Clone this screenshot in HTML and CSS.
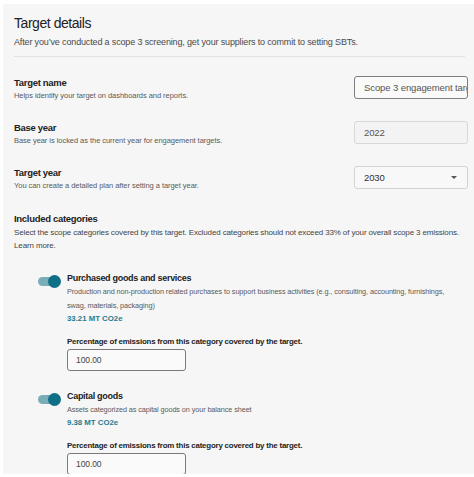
FILE: index.html
```html
<!DOCTYPE html>
<html lang="en">
<head>
<meta charset="utf-8">
<title>Target details</title>
<link rel="stylesheet" href="styles.css">
</head>
<body>
<div class="panel">
  <h1 class="title">Target details</h1>
  <p class="subtitle">After you’ve conducted a scope 3 screening, get your suppliers to commit to setting SBTs.</p>
  <hr class="divider">

  <div class="row">
    <div class="row-text">
      <div class="label">Target name</div>
      <div class="helper">Helps identify your target on dashboards and reports.</div>
    </div>
    <div class="field field-active"><span class="field-value">Scope 3 engagement targ</span></div>
  </div>

  <div class="row">
    <div class="row-text">
      <div class="label">Base year</div>
      <div class="helper">Base year is locked as the current year for engagement targets.</div>
    </div>
    <div class="field field-disabled"><span class="field-value">2022</span></div>
  </div>

  <div class="row">
    <div class="row-text">
      <div class="label">Target year</div>
      <div class="helper">You can create a detailed plan after setting a target year.</div>
    </div>
    <div class="field field-select"><span class="field-value">2030</span><span class="caret"></span></div>
  </div>

  <div class="included">
    <div class="label">Included categories</div>
    <p class="included-desc">Select the scope categories covered by this target. Excluded categories should not exceed 33% of your overall scope 3 emissions. Learn more.</p>
  </div>

  <div class="category first">
    <div class="toggle"><span class="knob"></span></div>
    <div class="cat-body">
      <div class="cat-title">Purchased goods and services</div>
      <p class="cat-desc">Production and non-production related purchases to support business activities (e.g., consulting, accounting, furnishings, swag, materials, packaging)</p>
      <div class="cat-amount">33.21 MT CO2e</div>
      <div class="pct-label">Percentage of emissions from this category covered by the target.</div>
      <div class="pct-input">100.00</div>
    </div>
  </div>

  <div class="category">
    <div class="toggle"><span class="knob"></span></div>
    <div class="cat-body">
      <div class="cat-title">Capital goods</div>
      <p class="cat-desc">Assets categorized as capital goods on your balance sheet</p>
      <div class="cat-amount">9.38 MT CO2e</div>
      <div class="pct-label">Percentage of emissions from this category covered by the target.</div>
      <div class="pct-input">100.00</div>
    </div>
  </div>
</div>
</body>
</html>
```

FILE: styles.css
```css
html, body {
  margin: 0;
  padding: 0;
  background: #ffffff;
  overflow: hidden;
}

body {
  font-family: "Liberation Sans", Arial, sans-serif;
  color: #222;
}

.panel {
  margin: 4px 0 0 3px;
  height: 470px;
  overflow: hidden;
  background: #f6f6f6;
  padding: 10px 6px 0 11px;
  box-sizing: border-box;
}

.title {
  margin: 0;
  font-size: 14px;
  line-height: 18px;
  letter-spacing: -0.45px;
  font-weight: 400;
  color: #222;
}

.subtitle {
  margin: 4px 0 0;
  font-size: 9px;
  line-height: 12px;
  letter-spacing: -0.15px;
  color: #4a4a4a;
}

.divider {
  margin: 8px 3px 0 0;
  border: 0;
  border-top: 1px solid #e2e2e2;
  height: 0;
}

.row {
  display: flex;
  justify-content: space-between;
  align-items: flex-start;
  height: 26px;
  margin-top: 19px;
}

.label {
  font-size: 9.5px;
  line-height: 14px;
  letter-spacing: -0.3px;
  font-weight: 700;
  color: #222;
}

.helper {
  font-size: 7.5px;
  line-height: 12px;
  letter-spacing: -0.05px;
  color: #5a5a5a;
}

.field {
  width: 114px;
  height: 23px;
  box-sizing: border-box;
  border-radius: 3px;
  padding: 0 9px;
  font-size: 9.5px;
  line-height: 21px;
  color: #555;
  white-space: nowrap;
  overflow: hidden;
  display: flex;
  align-items: center;
  justify-content: space-between;
}

.field-value {
  letter-spacing: -0.1px;
}

.field-active {
  border: 1px solid #7d7d7d;
  background: #fafafa;
  justify-content: flex-start;
}

.field-disabled {
  border: 1px solid #d8d8d8;
  background: #f3f3f3;
}

.field-select {
  border: 1px solid #d3d3d3;
  background: #f8f8f8;
  color: #333;
}

.caret {
  flex: none;
  width: 0;
  height: 0;
  border-left: 3px solid transparent;
  border-right: 3px solid transparent;
  border-top: 3px solid #555;
  margin-right: 1px;
}

.included {
  margin-top: 20px;
}

.included-desc {
  margin: 0;
  font-size: 8px;
  line-height: 13px;
  letter-spacing: -0.13px;
  color: #444;
}

.category {
  display: flex;
  align-items: flex-start;
  gap: 7px;
  padding-left: 24px;
  margin-top: 18px;
}

.category.first {
  margin-top: 19px;
}

.toggle {
  position: relative;
  flex: none;
  width: 22px;
  height: 9px;
  margin-top: 6px;
  border-radius: 5px;
  background: #79adb8;
}

.knob {
  position: absolute;
  right: -1px;
  top: -2px;
  width: 13px;
  height: 13px;
  border-radius: 50%;
  background: #0f6f86;
}

.cat-body {
  flex: 1;
  max-width: 388px;
}

.cat-title {
  font-size: 9px;
  line-height: 14px;
  letter-spacing: -0.3px;
  font-weight: 700;
  color: #222;
}

.cat-desc {
  margin: 0;
  font-size: 7.3px;
  line-height: 14px;
  letter-spacing: -0.1px;
  color: #5a5a5a;
}

.cat-amount {
  font-size: 7.8px;
  line-height: 12px;
  font-weight: 700;
  color: #1d7d90;
}

.pct-label {
  margin-top: 10px;
  font-size: 7.9px;
  line-height: 13px;
  letter-spacing: -0.2px;
  font-weight: 700;
  color: #222;
}

.pct-input {
  margin-top: 1px;
  width: 119px;
  height: 22px;
  box-sizing: border-box;
  border: 1px solid #7a7a7a;
  border-radius: 3px;
  background: #fafafa;
  padding: 0 8px;
  font-size: 8.5px;
  line-height: 20px;
  letter-spacing: -0.1px;
  color: #444;
}
```
